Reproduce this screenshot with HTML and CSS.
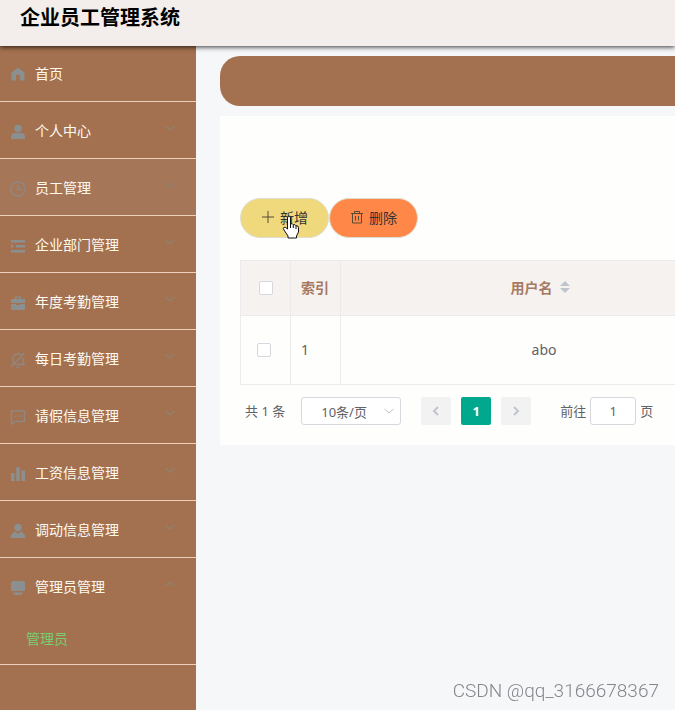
FILE: index.html
```html
<!DOCTYPE html>
<html lang="zh-CN">
<head>
<meta charset="utf-8">
<meta name="viewport" content="width=device-width, initial-scale=1">
<title>企业员工管理系统</title>
<link rel="stylesheet" href="styles.css">
</head>
<body>
<header class="header"><h1 class="title">企业员工管理系统</h1></header>
<div class="layout">
  <nav class="sidebar">
    <ul class="menu">
      <li class="menu-group"><a class="menu-item" href="#">
        <svg class="icon" viewBox="0 0 16 16"><path d="M8 1.500 1.500 6.500V14.500h4.500v-4a2 2 0 0 1 4 0v4h4.500v-8z"/></svg>
        <span>首页</span></a></li>
      <li class="menu-group"><a class="menu-item" href="#">
        <svg class="icon" viewBox="0 0 16 16"><circle cx="8" cy="4.500" r="3.700"/><path d="M1 15v-2q0-4 4-4h6q4 0 4 4v2z"/></svg>
        <span>个人中心</span><svg class="arrow" viewBox="0 0 12 12"><path d="m1.500 4 4.500 4 4.500-4"/></svg></a></li>
      <li class="menu-group hover"><a class="menu-item" href="#">
        <svg class="icon line" viewBox="0 0 16 16"><circle cx="8" cy="8" r="7"/><path d="M8 4v4.500h4"/></svg>
        <span>员工管理</span><svg class="arrow" viewBox="0 0 12 12"><path d="m1.500 4 4.500 4 4.500-4"/></svg></a></li>
      <li class="menu-group"><a class="menu-item" href="#">
        <svg class="icon" viewBox="0 0 16 16"><path d="M1 2h14v2.500H1zM6 7h9v2.500H6zM1 12h14v2.500H1zM1 6l3 2.200-3 2.200z"/></svg>
        <span>企业部门管理</span><svg class="arrow" viewBox="0 0 12 12"><path d="m1.500 4 4.500 4 4.500-4"/></svg></a></li>
      <li class="menu-group"><a class="menu-item" href="#">
        <svg class="icon" viewBox="0 0 16 16"><path d="M1 4h4V1.500h6V4h4v4H1zM6.200 2.700V4h3.600V2.700zM1 9h5v1h4V9h5v6H1z"/></svg>
        <span>年度考勤管理</span><svg class="arrow" viewBox="0 0 12 12"><path d="m1.500 4 4.500 4 4.500-4"/></svg></a></li>
      <li class="menu-group"><a class="menu-item" href="#">
        <svg class="icon line" viewBox="0 0 16 16"><path d="M1 15 14.500 1M3 11V7q0-5 5-5 2 0 3.300 1M13 6v6.500H5M13 12.500h2M6.500 15h3M8 2V.5"/></svg>
        <span>每日考勤管理</span><svg class="arrow" viewBox="0 0 12 12"><path d="m1.500 4 4.500 4 4.500-4"/></svg></a></li>
      <li class="menu-group"><a class="menu-item" href="#">
        <svg class="icon line" viewBox="0 0 16 16"><path d="M1.500 2h13v10.500H5L1.500 15zM4.500 7.300H6m1.300 0h1.500m1.300 0h1.500"/></svg>
        <span>请假信息管理</span><svg class="arrow" viewBox="0 0 12 12"><path d="m1.500 4 4.500 4 4.500-4"/></svg></a></li>
      <li class="menu-group"><a class="menu-item" href="#">
        <svg class="icon" viewBox="0 0 16 16"><path d="M1 7h3.500v8H1zM6.200 1h3.600v14H6.200zM11.500 4.500H15V15h-3.500z"/></svg>
        <span>工资信息管理</span><svg class="arrow" viewBox="0 0 12 12"><path d="m1.500 4 4.500 4 4.500-4"/></svg></a></li>
      <li class="menu-group"><a class="menu-item" href="#">
        <svg class="icon" viewBox="0 0 16 16"><circle cx="8" cy="4.500" r="3.700"/><path d="M.5 15q.5-5.500 5-6.500L8 11l2.500-2.500q4.500 1 5 6.500z"/></svg>
        <span>调动信息管理</span><svg class="arrow" viewBox="0 0 12 12"><path d="m1.500 4 4.500 4 4.500-4"/></svg></a></li>
      <li class="menu-group"><a class="menu-item" href="#">
        <svg class="icon" viewBox="0 0 16 16"><path d="M3 1h10q2 0 2 2v8H1V3q0-2 2-2zM3 12.500h10q-.5 2.500-3 2.500H6q-2.500 0-3-2.500z"/></svg>
        <span>管理员管理</span><svg class="arrow" viewBox="0 0 12 12"><path d="m1.500 8 4.500-4 4.500 4"/></svg></a>
        <a class="submenu-item" href="#">管理员</a></li>
    </ul>
  </nav>
  <main class="main">
    <div class="banner"></div>
    <section class="card">
      <div class="actions">
        <button class="btn btn-add" type="button">
          <svg class="btn-icon" viewBox="0 0 14 14"><path d="M7 1v12M1 7h12"/></svg><span>新增</span>
          <svg class="pointer" viewBox="0 0 18 24"><path d="M5.500 14V3q0-2 1.500-2t1.500 2v6q2-1 2.800.8 2-.8 2.700 1 2.500-.6 2.500 2V17l-2 4v2H6v-2l-4-6q-1.500-2 0-2.700 1.500-.6 3.500 1.700zM8.500 9v4m2.800-3.200V13m2.700-2.200V14"/></svg>
        </button>
        <button class="btn btn-delete" type="button">
          <svg class="btn-icon" viewBox="0 0 14 14"><path d="M1 3.500h12M4.500 3.500v-2h5v2M2.500 3.500v9.500h9V3.500M5.500 6v4.500M8.500 6v4.500"/></svg><span>删除</span>
        </button>
      </div>
      <div class="table-wrap">
        <table class="table">
          <thead><tr>
            <th class="col-check"><input class="check" type="checkbox" aria-label="全选"></th>
            <th class="col-index">索引</th>
            <th class="col-name"><span class="sortable">用户名<svg class="sort" viewBox="0 0 10 14"><path d="M5 1l5 5H0zM0 8h10l-5 5z"/></svg></span></th>
          </tr></thead>
          <tbody><tr>
            <td class="col-check"><input class="check" type="checkbox" aria-label="选择"></td>
            <td class="col-index">1</td>
            <td class="col-name">abo</td>
          </tr></tbody>
        </table>
      </div>
      <div class="pagination">
        <span>共 1 条</span>
        <div class="size">
          <select class="size-select" aria-label="每页条数"><option>10条/页</option></select>
          <svg class="size-arrow" viewBox="0 0 12 12"><path d="m1.500 4 4.500 4 4.500-4"/></svg>
        </div>
        <div class="pager">
          <button class="page" type="button" aria-label="上一页" disabled><svg viewBox="0 0 12 12"><path d="M8 2 4 6l4 4"/></svg></button>
          <button class="page current" type="button">1</button>
          <button class="page" type="button" aria-label="下一页" disabled><svg viewBox="0 0 12 12"><path d="m4 2 4 4-4 4"/></svg></button>
        </div>
        <label class="jump">前往<input class="jump-input" type="text" value="1">页</label>
      </div>
    </section>
  </main>
</div>
<div class="watermark">CSDN @qq_3166678367</div>
</body>
</html>
```

FILE: styles.css
```css
* { box-sizing: border-box; }
body {
  margin: 0;
  min-height: 100vh;
  display: flex;
  flex-direction: column;
  background: #f5f7f9;
  font-family: "Noto Sans", "Noto Sans CJK SC", sans-serif;
  font-size: 14px;
  color: #606266;
  overflow-x: hidden;
}
button, input, select { font: inherit; color: inherit; margin: 0; }
a { text-decoration: none; }

.header {
  position: relative;
  z-index: 1;
  height: 46px;
  padding: 3px 20px;
  background: #f3eeec;
  box-shadow: 0 1px 5px rgba(0, 0, 0, .8);
}
.title { margin: 0; font-size: 20px; line-height: 30px; color: #000; }

.layout { flex: 1; display: flex; }
.sidebar { flex: 0 0 196px; background: #a3714f; }
.menu { list-style: none; margin: 0; padding: 0; }
.menu-group { border-bottom: 1px solid #edcfba; }
.menu-group.hover { background: #a67658; }
.menu-item {
  display: flex;
  align-items: center;
  gap: 9px;
  height: 56px;
  padding: 0 20px 0 10px;
  color: #fffaf0;
}
.menu-group:first-child .menu-item { height: 55px; padding-bottom: 2px; }
.icon { width: 16px; height: 16px; margin-top: 3px; fill: #8b8f8f; fill-rule: evenodd; }
.icon.line { fill: none; stroke: #8f8881; stroke-width: 1.5; }
.arrow {
  width: 12px;
  height: 12px;
  margin: 0 0 4px auto;
  fill: none;
  stroke: #8f8270;
  stroke-width: 1.3;
}
.submenu-item {
  display: block;
  padding-left: 26px;
  line-height: 50px;
  color: #76cf70;
}

.main { flex: 1; min-width: 0; padding: 10px 0 0 24px; }
.banner { height: 50px; border-radius: 20px 0 0 20px; background: #a3714f; }
.card { margin-top: 10px; padding: 82px 0 20px 20px; background: #fefefd; }
.actions { display: flex; }
.btn {
  position: relative;
  display: flex;
  align-items: center;
  justify-content: center;
  gap: 5px;
  width: 89px;
  height: 40px;
  padding: 0 0 2px;
  border: 1px solid #dcdfd0;
  border-radius: 20px;
  color: #333;
}
.btn-add { background: #f0d97c; }
.btn-delete { background: #ff8848; }
.btn-icon { width: 14px; height: 14px; fill: none; stroke: #574a36; }
.pointer {
  position: absolute;
  left: 41px;
  top: 16px;
  width: 18px;
  height: 24px;
  fill: #fff;
  stroke: #111;
}

.table-wrap { margin-top: 22px; overflow: hidden; }
.table {
  table-layout: fixed;
  width: 508px;
  border-collapse: separate;
  border-spacing: 0;
  border: solid #ebebee;
  border-width: 1px 0 0 1px;
}
.table th, .table td {
  padding: 0 10px 2px;
  border: solid #ebebee;
  border-width: 0 1px 1px 0;
  text-align: left;
}
.table th { height: 55px; background: #f6f2f0; color: #a67a60; }
.table td { height: 69px; }
.table .col-check { width: 50px; padding: 0 0 4px; text-align: center; }
.table td.col-check { padding-right: 4px; }
.table .col-index { width: 50px; }
.table .col-name { text-align: center; }
.sortable { display: inline-flex; align-items: center; gap: 7px; padding-right: 8px; }
.sort { width: 10px; height: 14px; fill: #c0c4cc; }
.check {
  appearance: none;
  display: inline-block;
  vertical-align: middle;
  width: 14px;
  height: 14px;
  border: 1px solid #d6d8dd;
  border-radius: 2px;
  background: #fff;
}

.pagination {
  display: flex;
  align-items: center;
  margin-top: 12px;
  padding-left: 5px;
  font-size: 13px;
  line-height: 28px;
  white-space: nowrap;
}
.size { position: relative; width: 100px; margin-left: 16px; }
.size-select {
  appearance: none;
  display: block;
  width: 100%;
  height: 28px;
  padding: 0 24px 2px 19px;
  border: 1px solid #d6d8de;
  border-radius: 3px;
  background: #fff;
}
.size-arrow {
  position: absolute;
  right: 6px;
  top: 8px;
  width: 12px;
  height: 12px;
  fill: none;
  stroke: #c0c4cc;
  pointer-events: none;
}
.pager { display: flex; gap: 10px; margin-left: 20px; }
.page {
  display: flex;
  align-items: center;
  justify-content: center;
  width: 30px;
  height: 28px;
  padding: 0;
  border: 0;
  border-radius: 2px;
  background: #f2f2f2;
  font-weight: 700;
}
.page svg { width: 12px; height: 12px; fill: none; stroke: #c0c4cc; stroke-width: 2; }
.page.current { background: #00a98e; color: #fff; }
.jump { display: flex; align-items: center; gap: 4px; margin-left: 29px; }
.jump-input {
  width: 46px;
  height: 28px;
  padding: 0;
  border: 1px solid #d6d8de;
  border-radius: 3px;
  background: #fff;
  text-align: center;
}

.watermark {
  position: fixed;
  right: 16px;
  bottom: 8px;
  font-family: Roboto, sans-serif;
  font-size: 19px;
  font-weight: 300;
  line-height: 22px;
  color: #85868a;
}
```
